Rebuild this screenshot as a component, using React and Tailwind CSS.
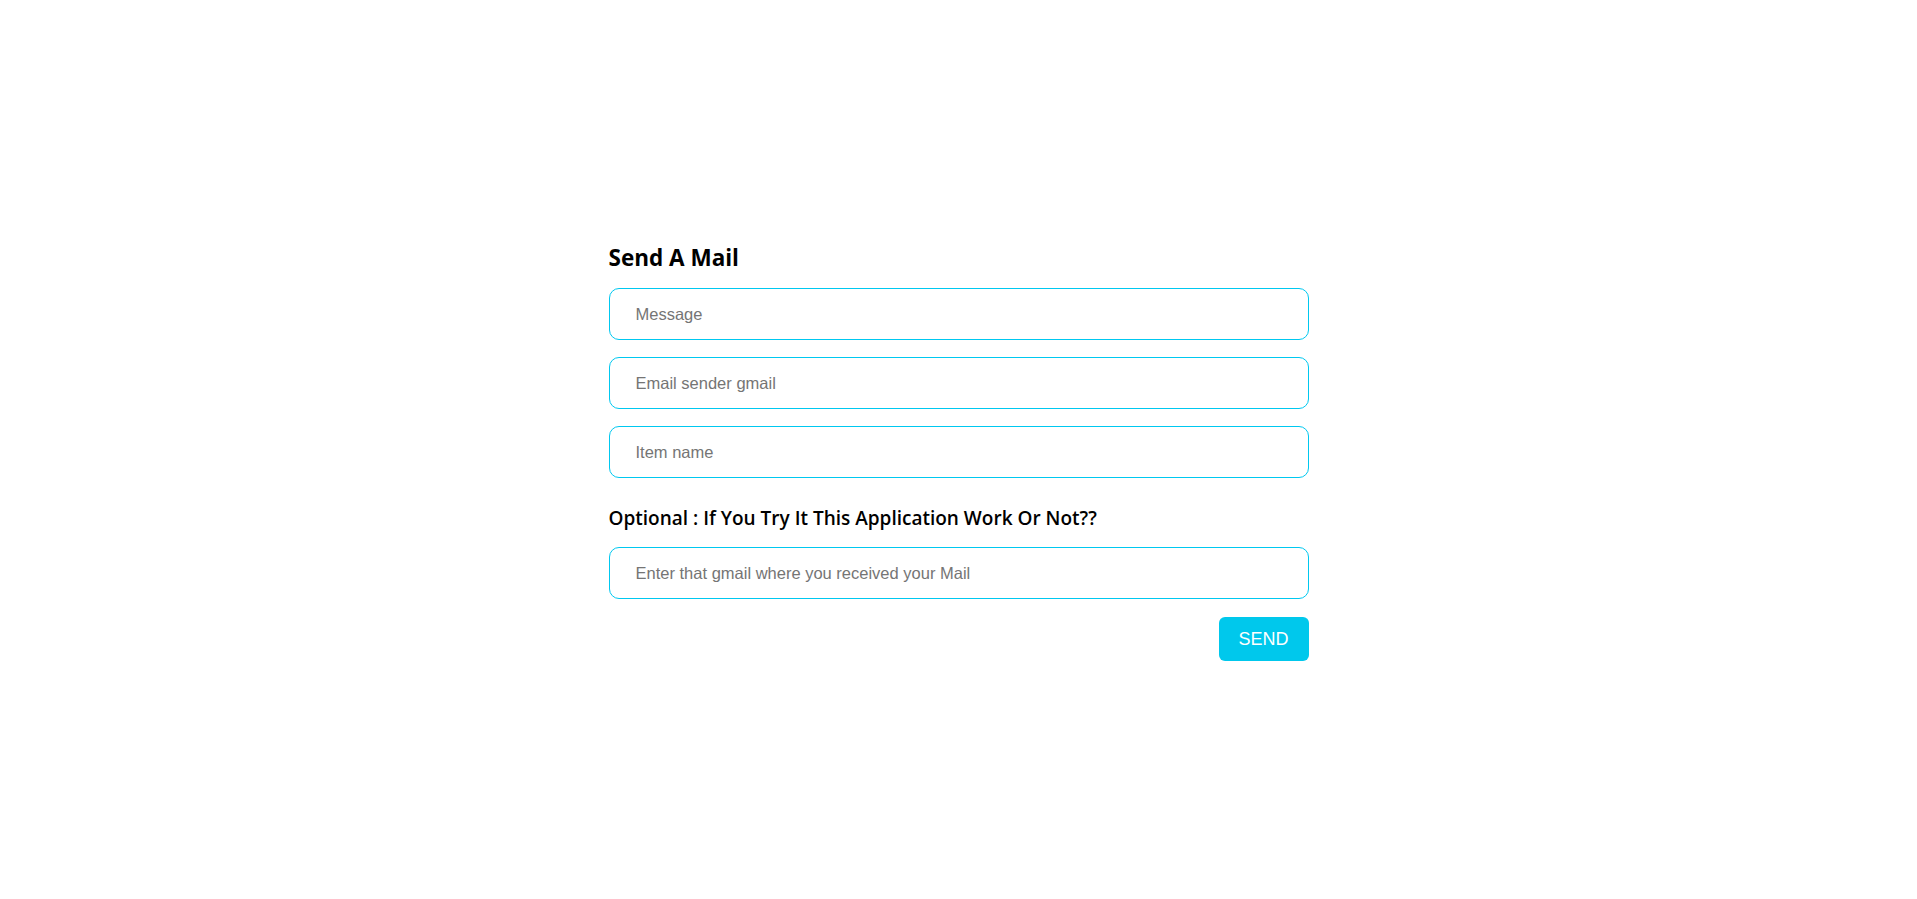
import React, { useState } from "react";

const inputClass =
  "w-full h-[52px] rounded-[10px] border border-[#00c8f0] bg-white pl-[26px] pr-4 text-[16.5px] text-[#222] outline-none placeholder:text-[#757575] font-['Liberation_Sans',Arial,sans-serif]";

const App = () => {
  const [message, setMessage] = useState("");
  const [sender, setSender] = useState("");
  const [item, setItem] = useState("");
  const [receiver, setReceiver] = useState("");

  return (
    <section className="min-h-screen bg-white flex justify-center pt-[244px]">
      <form
        className="w-[700px] flex flex-col"
        onSubmit={(e) => e.preventDefault()}
      >
        <h1 className="text-[22.5px] leading-[28px] font-bold text-black mb-[16px] font-['Open_Sans','Noto_Sans',sans-serif]">
          Send A Mail
        </h1>
        <input
          type="text"
          placeholder="Message"
          className={inputClass}
          value={message}
          onChange={(e) => setMessage(e.target.value)}
        />
        <input
          type="email"
          placeholder="Email sender gmail"
          className={inputClass + " mt-[17px]"}
          value={sender}
          onChange={(e) => setSender(e.target.value)}
        />
        <input
          type="text"
          placeholder="Item name"
          className={inputClass + " mt-[17px]"}
          value={item}
          onChange={(e) => setItem(e.target.value)}
        />
        {/* optional receiver */}
        <p className="mt-[28px] mb-[17px] text-[19px] leading-[24px] font-semibold text-black font-['Open_Sans','Noto_Sans',sans-serif]">
          Optional : If You Try It This Application Work Or Not??
        </p>
        <input
          type="email"
          placeholder="Enter that gmail where you received your Mail"
          className={inputClass}
          value={receiver}
          onChange={(e) => setReceiver(e.target.value)}
        />
        <div className="flex justify-end mt-[18px]">
          <button
            type="submit"
            className="w-[90px] h-[44px] rounded-[6px] bg-[#00c8ec] text-white text-[18px] font-['Liberation_Sans',Arial,sans-serif]"
          >
            SEND
          </button>
        </div>
      </form>
    </section>
  );
};

export default App;
